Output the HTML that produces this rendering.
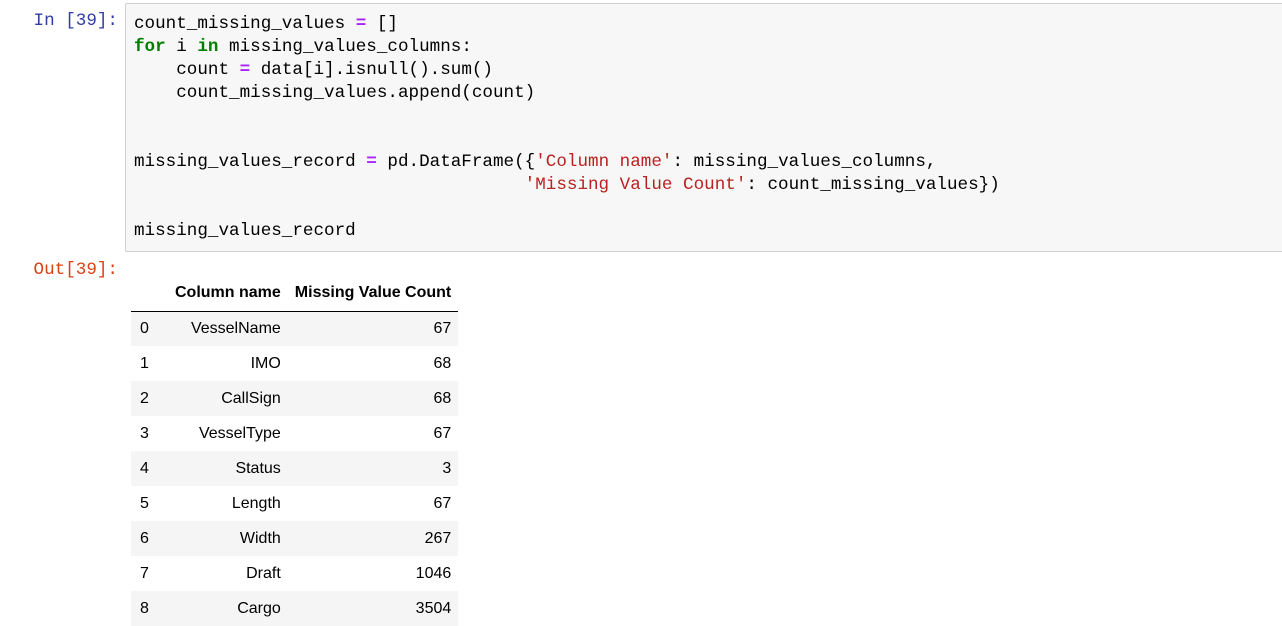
<!DOCTYPE html>
<html><head><style>
body{margin:0;background:#fff;width:1282px;height:622px;overflow:hidden;position:relative;font-family:"Liberation Sans",sans-serif}
.mono{font-family:"Liberation Mono",monospace;font-size:17.6px}
.prompt{position:absolute;left:0;width:118px;text-align:right}
.cell{position:absolute;left:125px;top:3px;width:1160px;height:247px;background:#f7f7f7;border:1px solid #cfcfcf;border-radius:2px}
pre{margin:0;position:absolute;left:8px;top:9px;line-height:23px;color:#000}
.k{color:#008000;font-weight:bold}.o{color:#aa22ff;font-weight:bold}.s{color:#ba2121}
table{position:absolute;left:131px;top:276px;border-collapse:collapse;font-size:16px;color:#000}
td,th{height:35px;padding:0 7px;text-align:right;box-sizing:border-box}
th{font-weight:bold;height:35px;border-bottom:1.5px solid #000;padding-bottom:0}
td:first-child{text-align:left;padding-left:9px;width:37px}
tr.g td{background:#f5f5f5}
</style></head><body>
<div class="prompt mono" style="top:11px;color:#303f9f">In [39]:</div>
<div class="cell"><pre class="mono">count_missing_values <span class="o">=</span> []
<span class="k">for</span> i <span class="o k" style="color:#008000">in</span> missing_values_columns:
    count <span class="o">=</span> data[i].isnull().sum()
    count_missing_values.append(count)


missing_values_record <span class="o">=</span> pd.DataFrame({<span class="s">'Column name'</span>: missing_values_columns,
                                     <span class="s">'Missing Value Count'</span>: count_missing_values})

missing_values_record</pre></div>
<div class="prompt mono" style="top:260px;color:#d84315">Out[39]:</div>
<table>
<tr><th></th><th>Column name</th><th>Missing Value Count</th></tr>
<tr class="g"><td>0</td><td>VesselName</td><td>67</td></tr>
<tr><td>1</td><td>IMO</td><td>68</td></tr>
<tr class="g"><td>2</td><td>CallSign</td><td>68</td></tr>
<tr><td>3</td><td>VesselType</td><td>67</td></tr>
<tr class="g"><td>4</td><td>Status</td><td>3</td></tr>
<tr><td>5</td><td>Length</td><td>67</td></tr>
<tr class="g"><td>6</td><td>Width</td><td>267</td></tr>
<tr><td>7</td><td>Draft</td><td>1046</td></tr>
<tr class="g"><td>8</td><td>Cargo</td><td>3504</td></tr>
</table>
</body></html>
